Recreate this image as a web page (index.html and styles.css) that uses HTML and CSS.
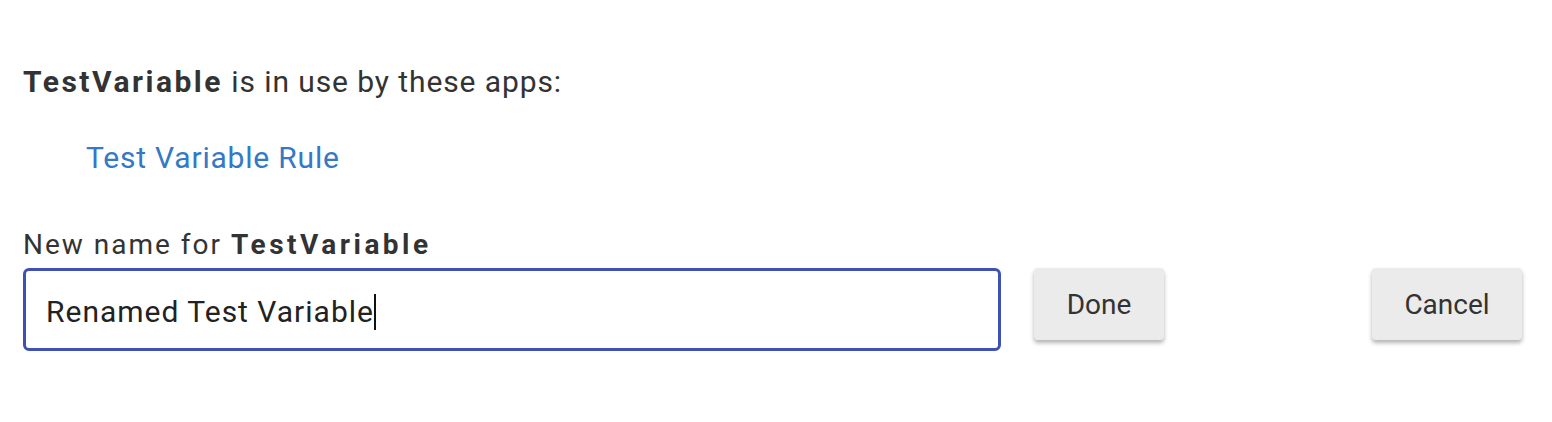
FILE: index.html
```html
<!DOCTYPE html>
<html>
<head>
<meta charset="utf-8">
<link rel="stylesheet" href="styles.css">
</head>
<body>
<div class="dialog">
  <p class="usage"><b class="var">TestVariable</b> is in use by these apps:</p>
  <div class="apps"><a class="app-link" href="#">Test Variable Rule</a></div>
  <label class="label" for="newname">New name for <b class="var2">TestVariable</b></label>
  <div class="row">
    <div class="field"><span class="value">Renamed Test Variable</span><span class="caret"></span></div>
    <button class="btn done">Done</button>
    <button class="btn cancel">Cancel</button>
  </div>
</div>
</body>
</html>
```
FILE: styles.css
```css
html, body { margin: 0; padding: 0; background: #fff; }
body { font-family: Roboto, "Noto Sans", sans-serif; color: #333; }
.dialog { padding: 65px 0 0 23px; width: 1499px; }
.usage { margin: 0; font-size: 30px; line-height: 34px; letter-spacing: 0.9px; color: #333; }
.var { font-weight: 700; letter-spacing: 2.5px; }
.apps { margin-top: 42px; padding-left: 63px; font-size: 30px; line-height: 34px; letter-spacing: 0.8px; }
.app-link { color: #3478c6; text-decoration: none; }
.label { display: block; margin-top: 55px; font-size: 28px; line-height: 30px; letter-spacing: 2px; color: #333; }
.var2 { font-weight: 700; letter-spacing: 3.5px; }
.row { display: flex; align-items: flex-start; margin-top: 8px; }
.field { width: 952px; height: 77px; border: 3px solid #3f51b5; border-radius: 6px; display: flex; align-items: center; padding-left: 20px; box-sizing: content-box; font-size: 30px; letter-spacing: 1px; color: #222; }
.value { position: relative; top: 2px; }
.caret { display: inline-block; width: 2px; height: 36px; background: #111; margin-left: 0; position: relative; top: 2px; }
.btn { font-family: Roboto, sans-serif; font-size: 28px; color: #333; background: #ebebeb; border: none; border-radius: 4px; height: 72px; box-shadow: 0 3px 4px rgba(0,0,0,0.3); padding: 0; }
.done { width: 130px; margin-left: 33px; }
.cancel { width: 150px; margin-left: auto; }
```
